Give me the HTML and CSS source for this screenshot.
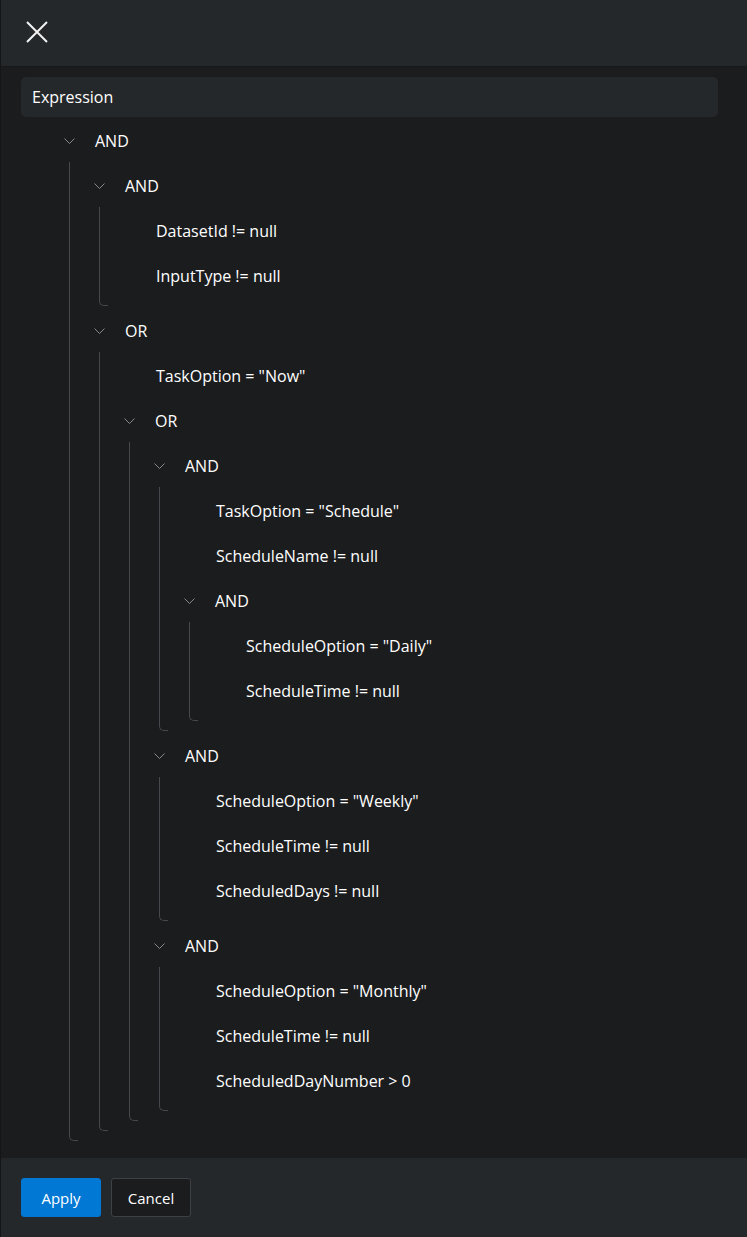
FILE: index.html
```html
<!DOCTYPE html>
<html>
<head>
<meta charset="utf-8">
<link rel="stylesheet" href="styles.css">
</head>
<body>
<div class="panel">
  <header class="header">
    <button class="close" aria-label="Close">
      <svg width="22" height="22" viewBox="0 0 22 22"><path d="M1 1 L21 21 M21 1 L1 21" stroke="#f2f2f2" stroke-width="2" fill="none"/></svg>
    </button>
  </header>
  <main class="main">
    <div class="expr">Expression</div>
    <div class="tree">
      <div class="node">
        <div class="row"><span class="chev"><svg width="11" height="6" viewBox="0 0 11 6"><polyline points="0.5,0.5 5.5,5.5 10.5,0.5" fill="none" stroke="#868a8f" stroke-width="1"/></svg></span><span class="label">AND</span></div>
        <div class="children">
          <div class="node">
            <div class="row"><span class="chev"><svg width="11" height="6" viewBox="0 0 11 6"><polyline points="0.5,0.5 5.5,5.5 10.5,0.5" fill="none" stroke="#868a8f" stroke-width="1"/></svg></span><span class="label">AND</span></div>
            <div class="children">
              <div class="row leaf"><span class="chev"></span><span class="label">DatasetId != null</span></div>
              <div class="row leaf"><span class="chev"></span><span class="label">InputType != null</span></div>
            </div>
          </div>
          <div class="node">
            <div class="row"><span class="chev"><svg width="11" height="6" viewBox="0 0 11 6"><polyline points="0.5,0.5 5.5,5.5 10.5,0.5" fill="none" stroke="#868a8f" stroke-width="1"/></svg></span><span class="label">OR</span></div>
            <div class="children">
              <div class="row leaf"><span class="chev"></span><span class="label">TaskOption = "Now"</span></div>
              <div class="node">
                <div class="row"><span class="chev"><svg width="11" height="6" viewBox="0 0 11 6"><polyline points="0.5,0.5 5.5,5.5 10.5,0.5" fill="none" stroke="#868a8f" stroke-width="1"/></svg></span><span class="label">OR</span></div>
                <div class="children">
                  <div class="node">
                    <div class="row"><span class="chev"><svg width="11" height="6" viewBox="0 0 11 6"><polyline points="0.5,0.5 5.5,5.5 10.5,0.5" fill="none" stroke="#868a8f" stroke-width="1"/></svg></span><span class="label">AND</span></div>
                    <div class="children">
                      <div class="row leaf"><span class="chev"></span><span class="label">TaskOption = "Schedule"</span></div>
                      <div class="row leaf"><span class="chev"></span><span class="label">ScheduleName != null</span></div>
                      <div class="node">
                        <div class="row"><span class="chev"><svg width="11" height="6" viewBox="0 0 11 6"><polyline points="0.5,0.5 5.5,5.5 10.5,0.5" fill="none" stroke="#868a8f" stroke-width="1"/></svg></span><span class="label">AND</span></div>
                        <div class="children">
                          <div class="row leaf"><span class="chev"></span><span class="label">ScheduleOption = "Daily"</span></div>
                          <div class="row leaf"><span class="chev"></span><span class="label">ScheduleTime != null</span></div>
                        </div>
                      </div>
                    </div>
                  </div>
                  <div class="node">
                    <div class="row"><span class="chev"><svg width="11" height="6" viewBox="0 0 11 6"><polyline points="0.5,0.5 5.5,5.5 10.5,0.5" fill="none" stroke="#868a8f" stroke-width="1"/></svg></span><span class="label">AND</span></div>
                    <div class="children">
                      <div class="row leaf"><span class="chev"></span><span class="label">ScheduleOption = "Weekly"</span></div>
                      <div class="row leaf"><span class="chev"></span><span class="label">ScheduleTime != null</span></div>
                      <div class="row leaf"><span class="chev"></span><span class="label">ScheduledDays != null</span></div>
                    </div>
                  </div>
                  <div class="node">
                    <div class="row"><span class="chev"><svg width="11" height="6" viewBox="0 0 11 6"><polyline points="0.5,0.5 5.5,5.5 10.5,0.5" fill="none" stroke="#868a8f" stroke-width="1"/></svg></span><span class="label">AND</span></div>
                    <div class="children">
                      <div class="row leaf"><span class="chev"></span><span class="label">ScheduleOption = "Monthly"</span></div>
                      <div class="row leaf"><span class="chev"></span><span class="label">ScheduleTime != null</span></div>
                      <div class="row leaf"><span class="chev"></span><span class="label">ScheduledDayNumber &gt; 0</span></div>
                    </div>
                  </div>
                </div>
              </div>
            </div>
          </div>
        </div>
      </div>
    </div>
  </main>
  <footer class="footer">
    <button class="btn primary">Apply</button>
    <button class="btn secondary">Cancel</button>
  </footer>
</div>
</body>
</html>
```

FILE: styles.css
```css
html, body {
  margin: 0;
  padding: 0;
  height: 100%;
  background: #1b1c1e;
}
body {
  font-family: "Open Sans", "Noto Sans", sans-serif;
  color: #ffffff;
}
.panel {
  display: flex;
  flex-direction: column;
  height: 100vh;
  border-left: 1px solid #141517;
  box-sizing: border-box;
}
.header {
  height: 67px;
  flex: none;
  background: #25282a;
  border-bottom: 1px solid #17181a;
  box-sizing: border-box;
  display: flex;
  align-items: flex-start;
}
.close {
  background: none;
  border: none;
  padding: 0;
  margin: 21px 0 0 25px;
  width: 22px;
  height: 22px;
  display: block;
}
.close svg { display: block; }
.main {
  flex: 1;
  padding: 10px 29px 0 20px;
}
.expr {
  height: 40px;
  background: #25282a;
  border-radius: 5px;
  display: flex;
  align-items: center;
  padding-left: 11px;
  font-size: 16px;
  margin-bottom: 1px;
}
.tree {
  padding-left: 38px;
}
.row {
  height: 45px;
  display: flex;
  align-items: center;
  font-size: 16px;
}
.chev {
  width: 21px;
  flex: none;
  display: flex;
  justify-content: center;
  align-items: center;
  padding-top: 1px;
}
.chev svg { display: block; }
.label {
  margin-left: 15px;
  white-space: nowrap;
}
.leaf .label {
  margin-left: 16px;
}
.children {
  position: relative;
  padding-left: 30px;
  padding-bottom: 10px;
}
.children::before {
  content: "";
  position: absolute;
  left: 10px;
  top: -1px;
  bottom: 2px;
  width: 8px;
  border-left: 1px solid #45484c;
  border-bottom: 1px solid #45484c;
  border-bottom-left-radius: 5px;
}
.footer {
  flex: none;
  background: #25282a;
  height: 79px;
  box-sizing: border-box;
  padding: 20px 20px;
  display: flex;
  gap: 10px;
}
.btn {
  width: 80px;
  height: 39px;
  border-radius: 3px;
  font-family: "Open Sans", "Noto Sans", sans-serif;
  font-size: 15px;
  color: #ffffff;
  padding: 0;
  box-sizing: border-box;
}
.primary {
  background: #0078d4;
  border: 1px solid #0078d4;
}
.secondary {
  background: #1b1c1e;
  border: 1px solid #3d4044;
}
```
